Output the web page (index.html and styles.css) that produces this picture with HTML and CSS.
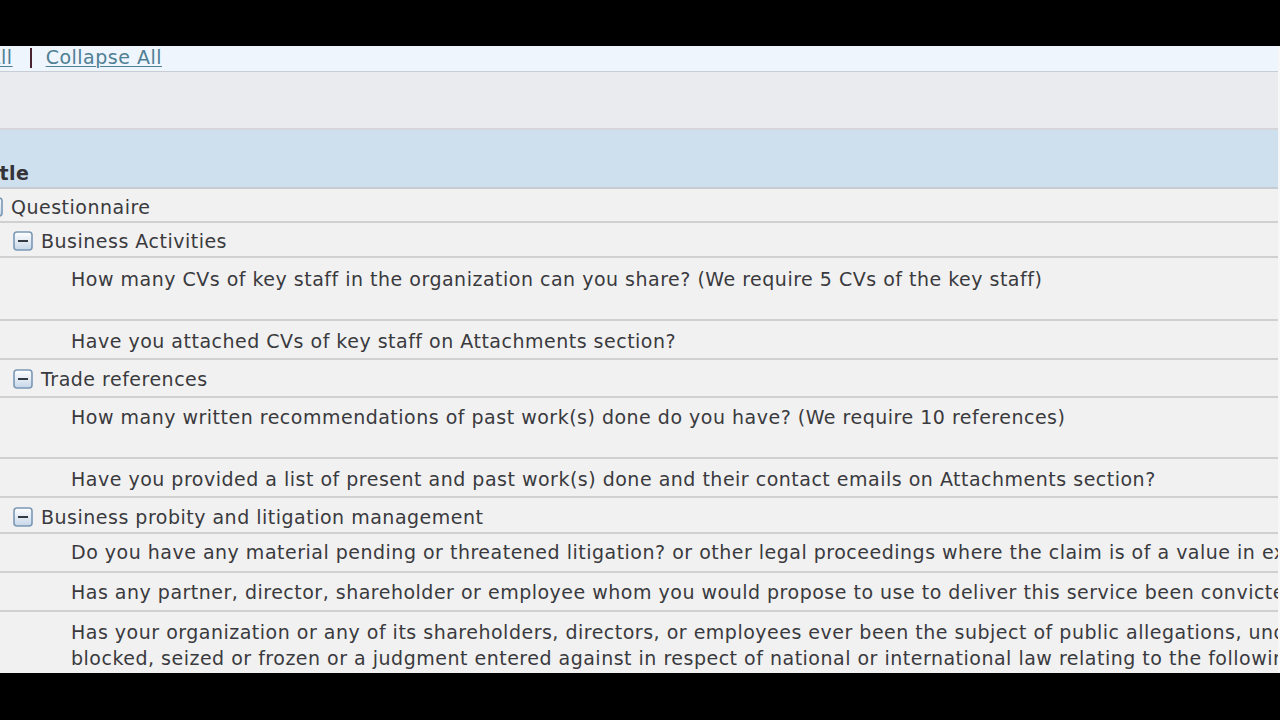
FILE: index.html
```html
<!DOCTYPE html>
<html lang="en">
<head>
<meta charset="utf-8">
<title>Questionnaire</title>
<link rel="stylesheet" href="styles.css">
</head>
<body>
<div class="screen">
  <div class="bar-top"></div>
  <div class="viewport">
    <div class="sheet">
      <div class="linkbar">
        <a class="link" href="#">Expand All</a>
        <span class="sep"></span>
        <a class="link" href="#">Collapse All</a>
      </div>
      <div class="band"></div>
      <div class="header"><span class="th">Title</span></div>

      <div class="row lvl1 r34"><svg class="tog" width="20" height="20" viewBox="0 0 20 20"><defs><linearGradient id="gb" x1="0" y1="0" x2="0" y2="1"><stop offset="0" stop-color="#ffffff"/><stop offset="1" stop-color="#c6d6e8"/></linearGradient></defs><rect x="1" y="1" width="18" height="18" rx="3" fill="url(#gb)" stroke="#7b98b6" stroke-width="1.6"/><rect x="5" y="9" width="10" height="2" fill="#333a44"/></svg><span class="txt">Questionnaire</span></div>

      <div class="row lvl2 r35"><svg class="tog" width="20" height="20" viewBox="0 0 20 20"><rect x="1" y="1" width="18" height="18" rx="3" fill="url(#gb)" stroke="#7b98b6" stroke-width="1.6"/><rect x="5" y="9" width="10" height="2" fill="#333a44"/></svg><span class="txt">Business Activities</span></div>
      <div class="row leaf r63 p8"><span class="txt">How many CVs of key staff in the organization can you share? (We require 5 CVs of the key staff)</span></div>
      <div class="row leaf r39 p7"><span class="txt">Have you attached CVs of key staff on Attachments section?</span></div>

      <div class="row lvl2 r38 p6"><svg class="tog" width="20" height="20" viewBox="0 0 20 20"><rect x="1" y="1" width="18" height="18" rx="3" fill="url(#gb)" stroke="#7b98b6" stroke-width="1.6"/><rect x="5" y="9" width="10" height="2" fill="#333a44"/></svg><span class="txt">Trade references</span></div>
      <div class="row leaf r61 p6"><span class="txt">How many written recommendations of past work(s) done do you have? (We require 10 references)</span></div>
      <div class="row leaf r39 p7"><span class="txt">Have you provided a list of present and past work(s) done and their contact emails on Attachments section?</span></div>

      <div class="row lvl2 r36 p6"><svg class="tog" width="20" height="20" viewBox="0 0 20 20"><rect x="1" y="1" width="18" height="18" rx="3" fill="url(#gb)" stroke="#7b98b6" stroke-width="1.6"/><rect x="5" y="9" width="10" height="2" fill="#333a44"/></svg><span class="txt">Business probity and litigation management</span></div>
      <div class="row leaf r39 p5"><span class="txt">Do you have any material pending or threatened litigation? or other legal proceedings where the claim is of a value in excess of 10% of your annual turnover?</span></div>
      <div class="row leaf r39 p6"><span class="txt">Has any partner, director, shareholder or employee whom you would propose to use to deliver this service been convicted of any criminal offence?</span></div>
      <div class="row leaf r80 p7"><span class="txt">Has your organization or any of its shareholders, directors, or employees ever been the subject of public allegations, under investigation, or had its assets<br>blocked, seized or frozen or a judgment entered against in respect of national or international law relating to the following offences?</span></div>
    </div>
  </div>
  <div class="bar-bottom"></div>
</div>
</body>
</html>
```

FILE: styles.css
```css
html, body {
  margin: 0;
  padding: 0;
  background: #000;
  overflow: hidden;
}

body {
  font-family: "DejaVu Sans", sans-serif;
  font-size: 19px;
  letter-spacing: 0.5px;
  color: #3a3a3e;
}

.screen {
  width: 1280px;
  height: 720px;
  display: flex;
  flex-direction: column;
}

.bar-top {
  flex: none;
  height: 46px;
  background: #000;
}

.viewport {
  flex: none;
  height: 627px;
  overflow: hidden;
  background: #f1f1f1;
  border-right: 2px solid #f7f7f7;
  box-sizing: border-box;
}

.bar-bottom {
  flex: 1;
  background: #000;
}

.sheet {
  margin-left: -100px;
  width: 1700px;
}

.linkbar {
  height: 26px;
  box-sizing: border-box;
  border-bottom: 1px solid #c9cdd3;
  background: #eef5fc;
  display: flex;
  align-items: flex-start;
  padding-left: 7px;
  line-height: 22px;
}

.link {
  color: #4e7f94;
  text-decoration: underline;
  text-decoration-thickness: 1px;
  text-underline-offset: 2px;
}

.sep {
  width: 2px;
  height: 20px;
  margin: 2px 14px 0 17px;
  background: #4a2232;
}

.band {
  height: 58px;
  box-sizing: border-box;
  background: #e9ebee;
  border-bottom: 2px solid #d4d6d9;
}

.header {
  height: 59px;
  box-sizing: border-box;
  background: #cedfed;
  border-bottom: 2px solid #c7ccd2;
  padding-top: 30px;
  padding-left: 79px;
  line-height: 26px;
}

.th {
  font-weight: bold;
  color: #333338;
}

.row {
  box-sizing: border-box;
  display: flex;
  align-items: flex-start;
  border-bottom: 2px solid #d0d0d0;
  background: #f1f1f1;
  padding-top: 5px;
  line-height: 26px;
  white-space: nowrap;
}

.tog {
  flex: none;
  margin-top: 3px;
  margin-right: 8px;
}

.lvl1 { padding-left: 83px; }
.lvl2 { padding-left: 113px; }
.leaf { padding-left: 171px; }

.r34 { height: 34px; }
.r35 { height: 35px; }
.r36 { height: 36px; }
.r38 { height: 38px; }
.r39 { height: 39px; }
.r61 { height: 61px; }
.r63 { height: 63px; }
.r80 { height: 80px; border-bottom: none; }

.p5 { padding-top: 5px; }
.p6 { padding-top: 6px; }
.p7 { padding-top: 7px; }
.p8 { padding-top: 8px; }
```
